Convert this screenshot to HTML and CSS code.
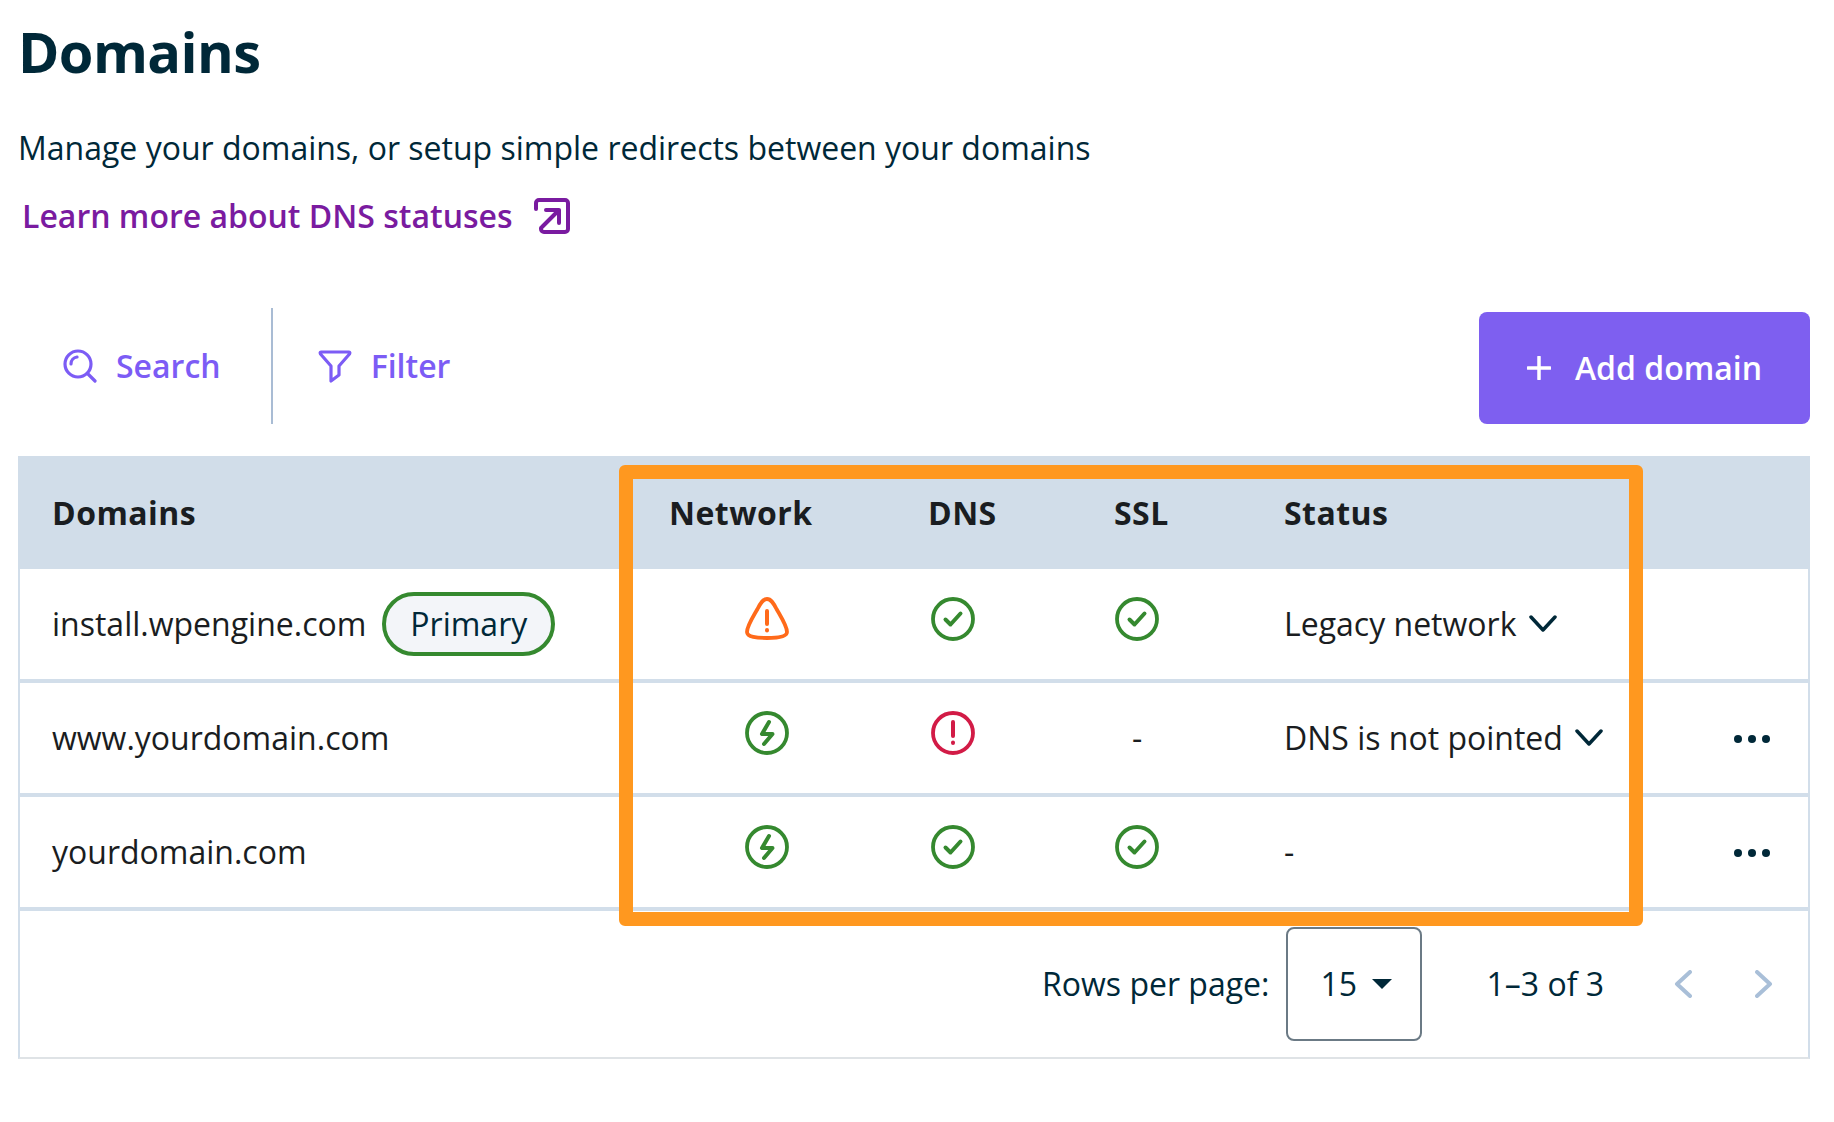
FILE: index.html
```html
<!DOCTYPE html>
<html lang="en">
<head>
<meta charset="utf-8">
<title>Domains</title>
<link rel="stylesheet" href="styles.css">
</head>
<body>
<svg class="defs" aria-hidden="true">
  <symbol id="i-check" viewBox="0 0 44 44"><circle cx="22" cy="22" r="20"/><path class="heavy" d="M14.5 22.5 19.5 27.5 29.5 16.5"/></symbol>
  <symbol id="i-bolt" viewBox="0 0 44 44"><circle cx="22" cy="22" r="20"/><path class="heavy" d="M24 11 17 23H27.5L19 33"/></symbol>
  <symbol id="i-alert" viewBox="0 0 44 44"><circle cx="22" cy="22" r="20"/><path class="heavy" d="M22 11V25M22 31.5V32"/></symbol>
  <symbol id="i-warn" viewBox="0 0 44 44"><path d="M22 2C26 2 28.500 6 31.500 12 36 20 42 29 42 35 42 40 32 41 22 41 12 41 2 40 2 35 2 29 8 20 12.500 12 15.500 6 18 2 22 2Z"/><path class="heavy" d="M22 14V27M22 33V33.500"/></symbol>
  <symbol id="i-chev" viewBox="0 0 28 18"><path d="M2 2 14 15 26 2"/></symbol>
  <symbol id="i-dots" viewBox="0 0 36 8"><circle cx="4" cy="4" r="4"/><circle cx="18" cy="4" r="4"/><circle cx="32" cy="4" r="4"/></symbol>
</svg>

<main class="page">
  <h1 class="title">Domains</h1>
  <p class="intro">Manage your domains, or setup simple redirects between your domains</p>
  <a class="learn" href="#">Learn more about DNS statuses
    <svg class="learn-icon" viewBox="0 0 36 36"><path d="M2 11V5A3 3 0 0 1 5 2H31A3 3 0 0 1 34 5V31A3 3 0 0 1 31 34H10A3 3 0 0 1 7 31V30"/><path d="M8 29 25 12M12 12H25V25"/></svg>
  </a>

  <div class="toolbar">
    <div class="tools">
      <button class="tool tool-search" type="button">
        <svg class="tool-icon" viewBox="0 0 34 34"><circle cx="15" cy="15" r="13"/><path d="M25 25 32 32M8 15A7 7 0 0 1 14 8"/></svg>
        Search
      </button>
      <span class="divider"></span>
      <button class="tool tool-filter" type="button">
        <svg class="tool-icon" viewBox="0 0 34 34"><path d="M3 3H31C32 3 32 4 31.500 5L21 17V26L13 32V17L2.500 5C2 4 2 3 3 3Z"/></svg>
        Filter
      </button>
    </div>
    <button class="add" type="button">
      <svg class="add-icon" viewBox="0 0 24 24"><path d="M12 1V23M1 12H23"/></svg>
      Add domain
    </button>
  </div>

  <section class="table">
    <div class="row head">
      <div>Domains</div><div>Network</div><div>DNS</div><div>SSL</div><div>Status</div><div></div>
    </div>

    <div class="row">
      <div class="name">install.wpengine.com <span class="pill">Primary</span></div>
      <div class="c-net"><svg class="st warn"><use href="#i-warn"/></svg></div>
      <div class="c-dns"><svg class="st ok"><use href="#i-check"/></svg></div>
      <div class="c-ssl"><svg class="st ok"><use href="#i-check"/></svg></div>
      <div class="status">Legacy network <svg class="chev"><use href="#i-chev"/></svg></div>
      <div></div>
    </div>

    <div class="row">
      <div class="name">www.yourdomain.com</div>
      <div class="c-net"><svg class="st ok"><use href="#i-bolt"/></svg></div>
      <div class="c-dns"><svg class="st bad"><use href="#i-alert"/></svg></div>
      <div class="c-ssl dash">-</div>
      <div class="status">DNS is not pointed <svg class="chev"><use href="#i-chev"/></svg></div>
      <div class="more"><svg class="dots"><use href="#i-dots"/></svg></div>
    </div>

    <div class="row">
      <div class="name">yourdomain.com</div>
      <div class="c-net"><svg class="st ok"><use href="#i-bolt"/></svg></div>
      <div class="c-dns"><svg class="st ok"><use href="#i-check"/></svg></div>
      <div class="c-ssl"><svg class="st ok"><use href="#i-check"/></svg></div>
      <div class="status">-</div>
      <div class="more"><svg class="dots"><use href="#i-dots"/></svg></div>
    </div>

    <div class="pager">
      <span class="rows-label">Rows per page:</span>
      <div class="select">15 <span class="caret"></span></div>
      <span class="range">1–3 of 3</span>
      <svg class="nav nav-prev" viewBox="0 0 18 28"><path d="M16 2 3 14 16 26"/></svg>
      <svg class="nav nav-next" viewBox="0 0 18 28"><path d="M2 2 15 14 2 26"/></svg>
    </div>

    <div class="highlight"></div>
  </section>
</main>
</body>
</html>
```

FILE: styles.css
```css
* { box-sizing: border-box; }

html, body { margin: 0; background: #fff; }

body {
  font-family: "Open Sans", "Noto Sans", sans-serif;
  font-size: 32px;
  line-height: 44px;
  color: #002838;
}

.defs { display: none; }

.page { width: 1834px; height: 1122px; padding: 13px 24px 0 18px; }

.title { margin: 0; font-size: 56px; line-height: 76px; font-weight: 700; letter-spacing: -0.6px; }

.intro { margin: 37px 0 0; }

.learn {
  display: flex;
  align-items: center;
  gap: 21px;
  margin: 24px 0 0 4px;
  font-weight: 600;
  color: #7a1ba0;
  text-decoration: none;
}

.learn-icon {
  width: 36px;
  height: 36px;
  fill: none;
  stroke: #7a1ba0;
  stroke-width: 4;
  stroke-linecap: round;
  stroke-linejoin: round;
}

.toolbar {
  display: flex;
  justify-content: space-between;
  align-items: flex-end;
  height: 116px;
  margin: 70px 0 32px;
}

.tools { display: flex; align-items: stretch; height: 116px; }

.tool {
  display: flex;
  align-items: center;
  gap: 19px;
  padding: 0;
  border: 0;
  background: none;
  font: inherit;
  font-weight: 600;
  color: #7c5cf5;
}

.tool-search { padding: 0 50px 0 45px; }
.tool-filter { padding-left: 45px; }

.tool-icon {
  width: 34px;
  height: 34px;
  fill: none;
  stroke: #7c5cf5;
  stroke-width: 3.200;
  stroke-linecap: round;
  stroke-linejoin: round;
}

.divider { width: 2px; background: #a9bcd4; }

.add {
  display: flex;
  align-items: center;
  justify-content: center;
  gap: 24px;
  width: 331px;
  height: 112px;
  border: 0;
  border-radius: 8px;
  background: #7e5ff0;
  font: inherit;
  font-weight: 600;
  color: #fff;
}

.add-icon {
  width: 24px;
  height: 24px;
  fill: none;
  stroke: #fff;
  stroke-width: 3.500;
  stroke-linecap: round;
}

.table {
  position: relative;
  width: 1792px;
  border-left: 2px solid #d2deea;
  border-right: 2px solid #d2deea;
  border-bottom: 2px solid #dfe3e6;
  color: #1a1d21;
}

.row {
  display: grid;
  grid-template-columns: 649px 259px 186px 170px 1fr 74px;
  align-items: center;
  height: 114px;
  border-bottom: 4px solid #d2deea;
}

.head {
  height: 113px;
  margin: 0 -2px;
  padding-left: 2px;
  padding-right: 2px;
  border-bottom: 0;
  background: #d1dde9;
  font-weight: 700;
  letter-spacing: 0.45px;
}

.head > div:first-child, .name { padding-left: 32px; }

.name { display: flex; align-items: center; gap: 16px; }

.pill {
  display: flex;
  align-items: center;
  height: 64px;
  padding: 0 24px;
  border: 4px solid #35892f;
  border-radius: 32px;
  background: #f3f5f9;
  color: #002838;
}

.c-net { padding-left: 76px; }
.c-dns { padding-left: 3px; }
.c-ssl { padding-left: 1px; }

.st {
  display: block;
  width: 44px;
  height: 44px;
  margin-bottom: 10px;
  fill: none;
  stroke-width: 3.800;
  stroke-linecap: round;
  stroke-linejoin: round;
}

.heavy { stroke-width: 4; }

.ok { stroke: #35892f; }
.bad { stroke: #d21b46; }
.warn { stroke: #ff6a1a; }

.c-ssl.dash { padding-left: 18px; }

.status { display: flex; align-items: center; gap: 12.5px; white-space: nowrap; }

.chev {
  width: 28px;
  height: 18px;
  fill: none;
  stroke: #002838;
  stroke-width: 3.500;
  stroke-linecap: round;
  stroke-linejoin: round;
}

.dots { display: block; width: 36px; height: 8px; margin-top: 2px; fill: #002838; }

.pager {
  display: flex;
  align-items: center;
  justify-content: flex-end;
  height: 146px;
  padding: 0 35px 0 0;
  color: #002838;
}

.select {
  display: flex;
  align-items: center;
  gap: 15px;
  width: 136px;
  height: 114px;
  margin-left: 17px;
  padding: 0 0 0 32px;
  border: 2px solid #6b7a85;
  border-radius: 8px;
}

.caret {
  width: 0;
  height: 0;
  border-left: 10px solid transparent;
  border-right: 10px solid transparent;
  border-top: 10px solid #002838;
}

.range { margin-left: 64px; }

.nav {
  width: 18px;
  height: 28px;
  fill: none;
  stroke: #a9bfd8;
  stroke-width: 4;
  stroke-linecap: round;
  stroke-linejoin: round;
}

.nav-prev { margin-left: 70px; }
.nav-next { margin-left: 63px; }

.highlight {
  position: absolute;
  left: 599px;
  top: 9px;
  width: 1024px;
  height: 461px;
  border: 14px solid #ff981f;
  border-radius: 6px;
  pointer-events: none;
}
```
